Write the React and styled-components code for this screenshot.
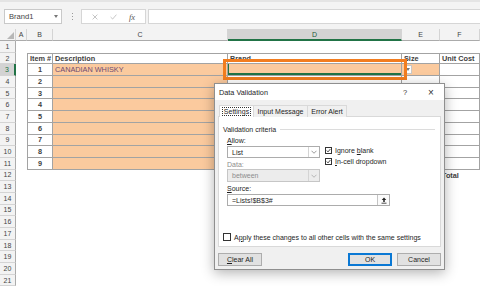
import React from "react";
import styled, { createGlobalStyle, css } from "styled-components";

const PEACH = "#fbca9e";
const GREEN = "#217346";
const TABLE_LINE = "#a3a3a3";

const GlobalStyle = createGlobalStyle`
  html, body {
    margin: 0;
    padding: 0;
    background: #fff;
    overflow: hidden;
  }
  body {
    font-family: "Liberation Sans", Arial, sans-serif;
  }
`;

const Screen = styled.div`
  position: relative;
  width: 480px;
  height: 286px;
  overflow: hidden;
  background: #fff;
`;

/* ---------- formula bar ---------- */

const FormulaBar = styled.div`
  height: 29px;
  box-sizing: border-box;
  padding: 7px 0 0 4px;
  background: #f3f3f3;
  border-top: 2px solid #e4e4e4;
  display: flex;
  align-items: flex-start;
`;

const NameBox = styled.div`
  width: 58px;
  height: 15px;
  box-sizing: border-box;
  background: #fff;
  border: 1px solid #c9c9c9;
  display: flex;
  align-items: center;
  justify-content: space-between;
  padding: 0 3px 0 4px;
  font-size: 7.6px;
  color: #444;
`;

const Caret = styled.span`
  width: 0;
  height: 0;
  border-left: 2.5px solid transparent;
  border-right: 2.5px solid transparent;
  border-top: 3px solid #777;
`;

const Grip = styled.div`
  width: 1px;
  height: 15px;
  margin: 0 8px 0 10px;
  display: flex;
  flex-direction: column;
  justify-content: center;
  gap: 2px;
  & > span {
    width: 1px;
    height: 1px;
    background: #9a9a9a;
  }
`;

const FxGroup = styled.div`
  width: 65px;
  height: 15px;
  box-sizing: border-box;
  background: #fff;
  border: 1px solid #d6d6d6;
  display: flex;
  align-items: center;
  justify-content: space-around;
  padding: 0 4px;
`;

const FxText = styled.span`
  font-family: "Liberation Serif", "Times New Roman", serif;
  font-style: italic;
  font-size: 8.5px;
  color: #555;
`;

const FormulaInput = styled.div`
  flex: 1;
  height: 15px;
  margin-left: 2px;
  box-sizing: border-box;
  background: #fff;
  border: 1px solid #d6d6d6;
  border-right: none;
`;

/* ---------- sheet ---------- */

const SheetGrid = styled.div`
  display: grid;
  grid-template-columns: 16px 11px 26px 175px 174px 38px 40px;
  grid-template-rows: 12px repeat(21, 11.7px);
`;

const Corner = styled.div`
  background: #f3f3f3;
  border-right: 1px solid #d4d4d4;
  border-bottom: 1px solid #ababab;
  box-sizing: border-box;
  display: flex;
  align-items: flex-end;
  justify-content: flex-end;
  padding: 0 1px 1px 0;
`;

const ColHead = styled.div`
  box-sizing: border-box;
  background: ${(p) => (p.$active ? "#d3d3d3" : "#f3f3f3")};
  border-right: 1px solid #d4d4d4;
  border-bottom: ${(p) => (p.$active ? `2px solid ${GREEN}` : "1px solid #ababab")};
  font-size: 7px;
  color: ${(p) => (p.$active ? "#1d5a37" : "#444")};
  display: flex;
  align-items: center;
  justify-content: center;
`;

const RowHead = styled.div`
  box-sizing: border-box;
  background: ${(p) => (p.$active ? "#d3d3d3" : "#f3f3f3")};
  border-right: ${(p) => (p.$active ? `2px solid ${GREEN}` : "1px solid #ababab")};
  border-bottom: 1px solid #d4d4d4;
  font-size: 7px;
  color: ${(p) => (p.$active ? GREEN : "#444")};
  display: flex;
  align-items: center;
  justify-content: center;
`;

const Cell = styled.div`
  box-sizing: border-box;
  display: flex;
  align-items: center;
  justify-content: ${(p) => (p.$center ? "center" : "flex-start")};
  padding: 0 2px;
  background: ${(p) => p.$fill || "#fff"};
  font-size: 7.3px;
  font-weight: ${(p) => (p.$bold ? 700 : 400)};
  color: ${(p) => p.$color || "#404040"};
  white-space: nowrap;
  overflow: hidden;
  ${(p) =>
    p.$boxed &&
    css`
      border-right: 1px solid ${TABLE_LINE};
      border-bottom: 1px solid ${TABLE_LINE};
    `}
  ${(p) => p.$top && css`border-top: 1px solid ${TABLE_LINE};`}
  ${(p) => p.$left && css`border-left: 1px solid ${TABLE_LINE};`}
  ${(p) =>
    p.$selected &&
    css`
      box-shadow: inset 1px 0 0 ${GREEN}, inset 0 -2px 0 ${GREEN};
    `}
`;

const DropButton = styled.span`
  width: 8px;
  height: 9px;
  margin-left: 0;
  box-sizing: border-box;
  background: #fff;
  border: 1px solid #c8c8c8;
  display: flex;
  align-items: center;
  justify-content: center;
`;

const Annotation = styled.div`
  position: absolute;
  left: 223px;
  top: 59px;
  width: 184px;
  height: 21px;
  box-sizing: border-box;
  border: 3px solid #f27d1f;
  pointer-events: none;
`;

/* ---------- dialog ---------- */

const Dialog = styled.div`
  position: absolute;
  left: 214px;
  top: 83px;
  width: 231px;
  height: 187px;
  box-sizing: border-box;
  background: #f0f0f0;
  border: 1px solid #8f8f8f;
  box-shadow: 0 3px 12px rgba(0, 0, 0, 0.3);
  display: flex;
  flex-direction: column;
  font-family: "Liberation Sans", Arial, sans-serif;
  font-size: 7px;
  color: #1e1e1e;
`;

const TitleBar = styled.div`
  height: 16px;
  flex: none;
  background: #fff;
  display: flex;
  align-items: center;
  padding-left: 4px;
`;

const Title = styled.span`
  flex: 1;
  font-size: 7.3px;
`;

const TitleButton = styled.span`
  width: 26px;
  text-align: center;
  font-size: ${(p) => (p.$big ? "10px" : "7.5px")};
  color: #333;
`;

const Body = styled.div`
  flex: 1;
  display: flex;
  flex-direction: column;
  padding: 4px 3px 3px;
  min-height: 0;
`;

const TabRow = styled.div`
  display: flex;
  padding-left: 1px;
  height: 12px;
  flex: none;
`;

const Tab = styled.div`
  width: ${(p) => p.$w}px;
  box-sizing: border-box;
  border: 1px solid #d9d9d9;
  border-bottom: none;
  margin-right: -1px;
  background: ${(p) => (p.$active ? "#fff" : "#f0f0f0")};
  display: flex;
  align-items: center;
  justify-content: center;
  font-size: 7px;
  position: relative;
  top: 1px;
`;

const Focus = styled.span`
  outline: 1px dotted #333;
  outline-offset: 0;
  padding: 0 1px;
`;

const Panel = styled.div`
  height: 131px;
  flex: none;
  box-sizing: border-box;
  background: #fff;
  border: 1px solid #d9d9d9;
  padding: 8px 0 0 4px;
  display: flex;
  flex-direction: column;
`;

const Legend = styled.div`
  display: flex;
  align-items: center;
  height: 8px;
  &::after {
    content: "";
    flex: 1;
    height: 1px;
    margin: 0 5px 0 4px;
    background: #dcdcdc;
  }
`;

const Criteria = styled.div`
  display: flex;
  margin: 4px 0 0 4px;
`;

const LeftCol = styled.div`
  width: 93px;
  display: flex;
  flex-direction: column;
`;

const RightCol = styled.div`
  display: flex;
  flex-direction: column;
  padding: 10px 0 0 5px;
  gap: 4px;
`;

const FieldLabel = styled.div`
  height: 8px;
  line-height: 8px;
  margin-top: ${(p) => p.$mt || 0}px;
  color: ${(p) => (p.$disabled ? "#8d8d8d" : "#1e1e1e")};
`;

const Select = styled.div`
  height: ${(p) => p.$h || 12}px;
  margin-top: ${(p) => p.$mt || 0}px;
  box-sizing: border-box;
  border: 1px solid ${(p) => (p.$disabled ? "#c6c6c6" : "#acacac")};
  background: ${(p) => (p.$disabled ? "#ececec" : "#fff")};
  color: ${(p) => (p.$disabled ? "#8d8d8d" : "#1e1e1e")};
  display: flex;
  align-items: center;
`;

const SelectText = styled.span`
  flex: 1;
  padding-left: 4px;
`;

const SelectArrow = styled.span`
  width: 11px;
  height: 100%;
  box-sizing: border-box;
  border-left: 1px solid #d4d4d4;
  display: flex;
  align-items: center;
  justify-content: center;
`;

const CheckRow = styled.label`
  display: flex;
  align-items: center;
  gap: 3px;
  height: 7px;
  white-space: nowrap;
`;

const Box = styled.span`
  width: ${(p) => p.$size || 7}px;
  height: ${(p) => p.$size || 7}px;
  flex: none;
  box-sizing: border-box;
  border: 1px solid #333;
  background: #fff;
  display: flex;
  align-items: center;
  justify-content: center;
`;

const SourceInput = styled.div`
  width: 163px;
  height: 12px;
  margin: 1px 0 0 4px;
  box-sizing: border-box;
  border: 1px solid #acacac;
  background: #fff;
  display: flex;
  align-items: center;
`;

const SourceButton = styled.span`
  width: 12px;
  height: 100%;
  box-sizing: border-box;
  border-left: 1px solid #c4c4c4;
  background: #fbfbfb;
  display: flex;
  align-items: center;
  justify-content: center;
`;

const ApplyRow = styled(CheckRow)`
  margin-top: auto;
  margin-bottom: 5px;
  height: 8px;
`;

const Footer = styled.div`
  display: flex;
  align-items: center;
  gap: 5px;
  padding-top: 6px;
`;

const Spacer = styled.div`
  flex: 1;
`;

const Button = styled.div`
  width: 44px;
  height: 13px;
  box-sizing: border-box;
  border: 1px solid ${(p) => (p.$primary ? "#0a78d4" : "#adadad")};
  box-shadow: ${(p) => (p.$primary ? "inset 0 0 0 1px #0a78d4" : "none")};
  background: #e1e1e1;
  display: flex;
  align-items: center;
  justify-content: center;
  font-size: 7px;
`;

/* ---------- small drawings ---------- */

const Check = () => (
  <svg width="5" height="5" viewBox="0 0 10 10">
    <polyline points="1.5,5 4,7.8 8.8,2" fill="none" stroke="#222" strokeWidth="1.6" />
  </svg>
);

const Chevron = ({ color = "#666" }) => (
  <svg width="6" height="4" viewBox="0 0 12 8">
    <polyline points="1,1.5 6,6.5 11,1.5" fill="none" stroke={color} strokeWidth="1.3" />
  </svg>
);

const CollapseIcon = () => (
  <svg width="6" height="7" viewBox="0 0 12 14">
    <path d="M6 1 L1.5 6 H4.5 V10 H7.5 V6 H10.5 Z" fill="#222" />
    <rect x="1" y="11.5" width="10" height="1.6" fill="#222" />
  </svg>
);

const CancelIcon = () => (
  <svg width="6" height="6" viewBox="0 0 10 10">
    <path d="M1 1 L9 9 M9 1 L1 9" stroke="#a8a8a8" strokeWidth="1.1" />
  </svg>
);

const EnterIcon = () => (
  <svg width="7" height="6" viewBox="0 0 12 10">
    <polyline points="1,5 4.5,8.5 11,1" fill="none" stroke="#a8a8a8" strokeWidth="1.1" />
  </svg>
);

const CornerMark = () => (
  <svg width="7" height="7" viewBox="0 0 7 7">
    <polygon points="7,0 7,7 0,7" fill="#b7b7b7" />
  </svg>
);

/* ---------- data ---------- */

const COLS = ["A", "B", "C", "D", "E", "F"];
const HEADERS = { B: "Item #", C: "Description", D: "Brand", E: "Size", F: "Unit Cost" };

function cellProps(row, col) {
  const inTable = row >= 2 && row <= 11 && col !== "A";
  const p = { $boxed: inTable, $top: inTable && row === 2, $left: inTable && col === "B" };
  let text = null;

  if (row === 2 && HEADERS[col]) {
    text = HEADERS[col];
    p.$bold = true;
  } else if (inTable) {
    if (col === "B") {
      text = String(row - 2);
      p.$bold = true;
      p.$center = true;
    }
    if (col === "C") {
      p.$fill = PEACH;
      if (row === 3) {
        text = "CANADIAN WHISKY";
        p.$color = "#6f4a72";
      }
    }
    if (row === 3 && (col === "D" || col === "E")) p.$fill = PEACH;
    if (row === 3 && col === "D") p.$selected = true;
  } else if (row === 12 && col === "F") {
    text = "Total";
    p.$bold = true;
  }
  return { p, text };
}

function Sheet() {
  const rows = Array.from({ length: 21 }, (_, i) => i + 1);
  return (
    <SheetGrid>
      <Corner>
        <CornerMark />
      </Corner>
      {COLS.map((c) => (
        <ColHead key={c} $active={c === "D"}>
          {c}
        </ColHead>
      ))}
      {rows.map((r) => (
        <React.Fragment key={r}>
          <RowHead $active={r === 3}>{r}</RowHead>
          {COLS.map((c) => {
            const { p, text } = cellProps(r, c);
            return (
              <Cell key={c} {...p}>
                {r === 3 && c === "E" ? (
                  <DropButton>
                    <Caret />
                  </DropButton>
                ) : (
                  text
                )}
              </Cell>
            );
          })}
        </React.Fragment>
      ))}
    </SheetGrid>
  );
}

function DataValidation() {
  return (
    <Dialog>
      <TitleBar>
        <Title>Data Validation</Title>
        <TitleButton>?</TitleButton>
        <TitleButton $big>×</TitleButton>
      </TitleBar>
      <Body>
        <TabRow>
          <Tab $w={35} $active>
            <Focus>Settings</Focus>
          </Tab>
          <Tab $w={55}>Input Message</Tab>
          <Tab $w={40}>Error Alert</Tab>
        </TabRow>
        <Panel>
          <Legend>Validation criteria</Legend>
          <Criteria>
            <LeftCol>
              <FieldLabel>
                <u>A</u>llow:
              </FieldLabel>
              <Select $mt={1}>
                <SelectText>List</SelectText>
                <SelectArrow>
                  <Chevron />
                </SelectArrow>
              </Select>
              <FieldLabel $mt={3} $disabled>
                Data:
              </FieldLabel>
              <Select $h={13} $disabled>
                <SelectText>between</SelectText>
                <SelectArrow>
                  <Chevron color="#999" />
                </SelectArrow>
              </Select>
            </LeftCol>
            <RightCol>
              <CheckRow>
                <Box>
                  <Check />
                </Box>
                <span>
                  Ignore <u>b</u>lank
                </span>
              </CheckRow>
              <CheckRow>
                <Box>
                  <Check />
                </Box>
                <span>
                  <u>I</u>n-cell dropdown
                </span>
              </CheckRow>
            </RightCol>
          </Criteria>
          <FieldLabel $mt={3} style={{ marginLeft: 4 }}>
            <u>S</u>ource:
          </FieldLabel>
          <SourceInput>
            <SelectText>=Lists!$B$3#</SelectText>
            <SourceButton>
              <CollapseIcon />
            </SourceButton>
          </SourceInput>
          <ApplyRow>
            <Box $size={8} />
            <span>
              A<u>p</u>ply these changes to all other cells with the same settings
            </span>
          </ApplyRow>
        </Panel>
        <Footer>
          <Button>
            <span>
              <u>C</u>lear All
            </span>
          </Button>
          <Spacer />
          <Button $primary>OK</Button>
          <Button>Cancel</Button>
        </Footer>
      </Body>
    </Dialog>
  );
}

export default function App() {
  return (
    <Screen>
      <GlobalStyle />
      <FormulaBar>
        <NameBox>
          <span>Brand1</span>
          <Caret />
        </NameBox>
        <Grip>
          <span />
          <span />
          <span />
        </Grip>
        <FxGroup>
          <CancelIcon />
          <EnterIcon />
          <FxText>fx</FxText>
        </FxGroup>
        <FormulaInput />
      </FormulaBar>
      <Sheet />
      <Annotation />
      <DataValidation />
    </Screen>
  );
}
